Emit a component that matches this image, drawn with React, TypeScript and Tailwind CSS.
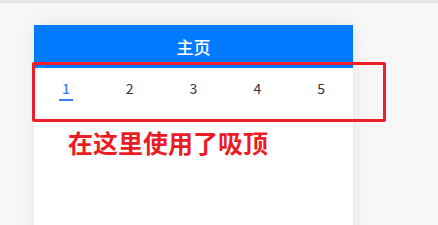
import React from "react";

export default function App() {
  const tabs = ["1", "2", "3", "4", "5"];
  return (
    <div
      className="relative w-[438px] h-[225px] overflow-hidden bg-[#f7f7f7]"
      style={{ fontFamily: '"Noto Sans CJK SC", "Noto Sans", sans-serif' }}
    >
      <div className="h-[3px] bg-[#e4e4e4]" />
      <div className="ml-[34px] mt-[22px] w-[320px] h-[260px] bg-white flex flex-col shadow-[0_0_18px_rgba(0,0,0,0.07)] border-r border-[#ececec]">
        <div className="h-[43px] bg-[#007aff] flex items-center justify-center text-white text-[17px] font-medium leading-none">
          主页
        </div>
        <div className="grid grid-cols-5 h-[44px]">
          {tabs.map((t, i) => (
            <div key={t} className="flex flex-col items-center pt-[10px]">
              <span
                className={
                  "text-[14px] leading-[20px] " +
                  (i === 0 ? "text-[#3a7cf5] font-medium" : "text-[#333333]")
                }
              >
                {t}
              </span>
              <span
                className={
                  "mt-[1px] w-[14px] h-[2px] " + (i === 0 ? "bg-[#3a7cf5]" : "bg-transparent")
                }
              />
            </div>
          ))}
        </div>
        <div className="pl-[34px] pt-[15px] text-[25px] leading-[30px] font-bold text-[#ea1c24]">
          在这里使用了吸顶
        </div>
      </div>
      <div className="absolute left-[32px] top-[62px] w-[354px] h-[60px] border-[3px] border-[#ee1f2a] rounded-[2px]" />
    </div>
  );
}
